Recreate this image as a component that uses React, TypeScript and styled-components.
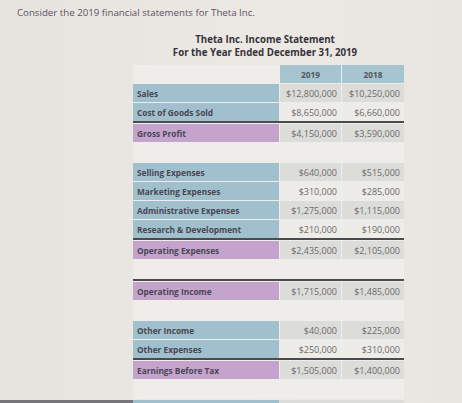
import React from "react";
import styled, { createGlobalStyle } from "styled-components";

const GlobalStyle = createGlobalStyle`
  html, body {
    margin: 0;
    padding: 0;
    background: #e9e7e2;
    font-family: "Open Sans", "Liberation Sans", sans-serif;
    overflow: hidden;
  }
`;

const Page = styled("div")`
  width: 462px;
  height: 403px;
  overflow: hidden;
  display: flex;
  flex-direction: column;
  background: linear-gradient(90deg, #e6e4df 0%, #ece9e4 60%, #e9e6e1 100%);
`;

const Intro = styled("p")`
  margin: 7px 0 0 17px;
  font-size: 9.7px;
  line-height: 12px;
  color: #5e5262;
`;

const Heading = styled("div")`
  margin-top: 14px;
  display: flex;
  flex-direction: column;
  align-items: center;
  padding-left: 68px;
  font-weight: 700;
  font-size: 9.7px;
  line-height: 13px;
  color: #36333b;
`;

const Table = styled("div")`
  margin: 6px 0 0 133px;
  width: 271px;
  display: flex;
  flex-direction: column;
  gap: 1px;
  background: #efede9;
`;

const Line = styled("div")`
  display: grid;
  grid-template-columns: 146px 62px 63px;
  height: 18px;
`;

type Tone = "blue" | "purple" | "dark" | "light" | "head" | "none";

const Cell = styled("div")<{ $tone: Tone }>`
  display: flex;
  align-items: center;
  background: ${(p) =>
    p.$tone === "blue"
      ? "#a0c0cd"
      : p.$tone === "purple"
      ? "#c4a4cd"
      : p.$tone === "dark"
      ? "#dcdcd8"
      : p.$tone === "light"
      ? "#edece8"
      : p.$tone === "head"
      ? "#a7c4d1"
      : "transparent"};
  border-left: 1px solid ${(p) => (p.$tone === "none" ? "transparent" : "#eeeeec")};
`;

const Label = styled(Cell)`
  padding-left: 4px;
  font-weight: 700;
  font-size: 8.3px;
  color: #4a4653;
  border-left: none;
`;

const Value = styled(Cell)`
  justify-content: flex-end;
  padding-right: 4px;
  font-size: 9px;
  color: #6b6b6b;
`;

const Year = styled(Cell)`
  justify-content: center;
  font-weight: 700;
  font-size: 8.3px;
  color: #545860;
`;

const Rule = styled("div")`
  height: 2px;
  margin-top: -1px;
  background: #4b4b4d;
`;

const Spacer = styled("div")`
  height: 19px;
`;

const Bottom = styled("div")`
  margin-top: 1px;
  display: flex;
  height: 6px;
`;

const Bezel = styled("div")`
  width: 133px;
  background: #77767a;
`;

const BottomLabel = styled("div")`
  width: 146px;
  background: #a0c0cd;
`;

const BottomValue = styled("div")`
  width: 125px;
  background: #dcdcd8;
`;

type Row =
  | { kind: "item" | "total"; label: string; a: string; b: string }
  | { kind: "gap" }
  | { kind: "rule" };

const rows: Row[] = [
  { kind: "item", label: "Sales", a: "$12,800,000", b: "$10,250,000" },
  { kind: "item", label: "Cost of Goods Sold", a: "$8,650,000", b: "$6,660,000" },
  { kind: "rule" },
  { kind: "total", label: "Gross Profit", a: "$4,150,000", b: "$3,590,000" },
  { kind: "gap" },
  { kind: "item", label: "Selling Expenses", a: "$640,000", b: "$515,000" },
  { kind: "item", label: "Marketing Expenses", a: "$310,000", b: "$285,000" },
  { kind: "item", label: "Administrative Expenses", a: "$1,275,000", b: "$1,115,000" },
  { kind: "item", label: "Research & Development", a: "$210,000", b: "$190,000" },
  { kind: "rule" },
  { kind: "total", label: "Operating Expenses", a: "$2,435,000", b: "$2,105,000" },
  { kind: "gap" },
  { kind: "rule" },
  { kind: "total", label: "Operating Income", a: "$1,715,000", b: "$1,485,000" },
  { kind: "gap" },
  { kind: "item", label: "Other Income", a: "$40,000", b: "$225,000" },
  { kind: "item", label: "Other Expenses", a: "$250,000", b: "$310,000" },
  { kind: "rule" },
  { kind: "total", label: "Earnings Before Tax", a: "$1,505,000", b: "$1,400,000" },
  { kind: "gap" },
];

const App = () => {
  let stripe = 0;
  return (
    <Page>
      <GlobalStyle />
      <Intro>Consider the 2019 financial statements for Theta Inc.</Intro>
      <Heading>
        <span>Theta Inc. Income Statement</span>
        <span>For the Year Ended December 31, 2019</span>
      </Heading>
      <Table>
        <Line>
          <Cell $tone="none" />
          <Year $tone="head">2019</Year>
          <Year $tone="head">2018</Year>
        </Line>
        {rows.map((row, i) => {
          if (row.kind === "gap") {
            stripe = 0;
            return <Spacer key={i} />;
          }
          if (row.kind === "rule") return <Rule key={i} />;
          const tone = stripe % 2 === 0 || row.kind === "total" ? "dark" : "light";
          stripe++;
          return (
            <Line key={i}>
              <Label $tone={row.kind === "total" ? "purple" : "blue"}>{row.label}</Label>
              <Value $tone={tone}>{row.a}</Value>
              <Value $tone={tone}>{row.b}</Value>
            </Line>
          );
        })}
      </Table>
      <Bottom>
        <Bezel />
        <BottomLabel />
        <BottomValue />
      </Bottom>
    </Page>
  );
};

export default App;
